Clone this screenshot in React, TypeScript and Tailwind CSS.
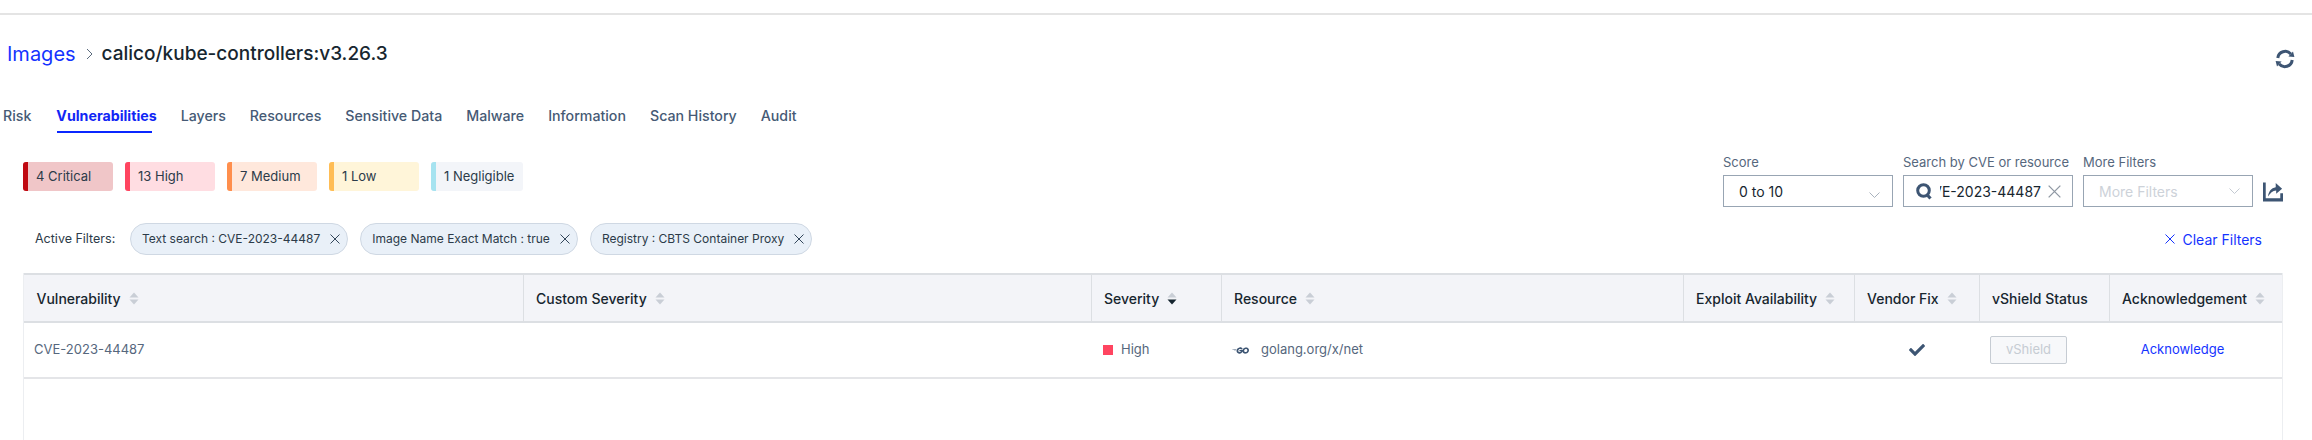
import React from 'react';
import { FaCheck } from 'react-icons/fa';
import { SiGo } from 'react-icons/si';

const tabs = ['Risk', 'Vulnerabilities', 'Layers', 'Resources', 'Sensitive Data', 'Malware', 'Information', 'Scan History', 'Audit'];

const badges = [
  { label: '4 Critical', bg: 'bg-[#f0c6c8]', bar: 'bg-[#c00a12]', width: 'w-[90px]' },
  { label: '13 High', bg: 'bg-[#ffdde2]', bar: 'bg-[#ff4560]', width: 'w-[90px]' },
  { label: '7 Medium', bg: 'bg-[#ffe8dc]', bar: 'bg-[#ff8f4d]', width: 'w-[90px]' },
  { label: '1 Low', bg: 'bg-[#fff5d9]', bar: 'bg-[#ffbd55]', width: 'w-[90px]' },
  { label: '1 Negligible', bg: 'bg-[#f3f5f9]', bar: 'bg-[#a6e3f0]', width: 'w-[92px]' },
];

const chips = ['Text search : CVE-2023-44487', 'Image Name Exact Match : true', 'Registry : CBTS Container Proxy'];

const columns = [
  { label: 'Vulnerability', width: 'w-[499px]', sort: true },
  { label: 'Custom Severity', width: 'w-[568px]', sort: true },
  { label: 'Severity', width: 'w-[130px]', sort: true, active: true },
  { label: 'Resource', width: 'w-[462px]', sort: true },
  { label: 'Exploit Availability', width: 'w-[171px]', sort: true },
  { label: 'Vendor Fix', width: 'w-[125px]', sort: true },
  { label: 'vShield Status', width: 'w-[130px]', sort: false },
  { label: 'Acknowledgement', width: 'w-[173px]', sort: true },
];

const SortIcon = ({ active }: { active?: boolean }) => (
  <svg width="10" height="13" viewBox="0 0 10 13" className="shrink-0">
    <path d="M5 0.5 L9.5 5.5 H0.5 Z" fill="#c9ced6" />
    <path d="M5 12.5 L9.5 7.5 H0.5 Z" fill={active ? '#15252f' : '#c9ced6'} />
  </svg>
);

const CloseIcon = ({ size = 10, color = '#33475b' }: { size?: number; color?: string }) => (
  <svg width={size} height={size} viewBox="0 0 10 10" className="shrink-0">
    <path d="M0.5 0.5 L9.5 9.5 M9.5 0.5 L0.5 9.5" stroke={color} strokeWidth="1" fill="none" />
  </svg>
);

const Chevron = ({ color }: { color: string }) => (
  <svg width="11" height="6" viewBox="0 0 11 6" className="shrink-0">
    <path d="M0.5 0.5 L5.5 5.5 L10.5 0.5" stroke={color} strokeWidth="1" fill="none" />
  </svg>
);

const SearchIcon = () => (
  <svg width="16" height="17" viewBox="0 0 16 17" className="shrink-0">
    <circle cx="7.5" cy="7.5" r="5.8" stroke="#3d5573" strokeWidth="3" fill="none" />
    <path d="M10.8 11.5 L14.5 15.5" stroke="#3d5573" strokeWidth="3.2" fill="none" />
  </svg>
);

const RefreshIcon = () => (
  <svg width="20" height="20" viewBox="0 0 20 20" className="shrink-0">
    <path d="M2.8 9 A7.4 7.4 0 0 1 15.8 5" stroke="#3d5573" strokeWidth="3" fill="none" />
    <path d="M17.2 11 A7.4 7.4 0 0 1 4.2 15" stroke="#3d5573" strokeWidth="3" fill="none" />
    <path d="M13.4 7.4 L19.4 8 L18 2.4 Z" fill="#3d5573" />
    <path d="M6.6 12.6 L0.6 12 L2 17.6 Z" fill="#3d5573" />
  </svg>
);

const ExportIcon = () => (
  <svg width="20" height="20" viewBox="0 0 22 21" className="shrink-0">
    <path d="M0 0 H3 V17.5 H19 V12 H22 V21 H0 Z" fill="#3d5573" />
    <path d="M5.5 15.5 C6 10 9 6 14 5.2 V0.5 L21 7 L14.5 12.5 V8.8 C10.5 9 8 11.5 5.5 15.5 Z" fill="#3d5573" />
  </svg>
);

const Field = ({ label, children }: { label: string; children: React.ReactNode }) => (
  <div className="w-[170px]">
    <div className="h-[13px] text-[13px] leading-[13px] text-[#56677d] whitespace-nowrap">{label}</div>
    <div className="mt-[6px] h-[32px] flex items-center border border-[#98a5b3] bg-white">{children}</div>
  </div>
);

export default function App() {
  return (
    <div className="w-[2312px] h-[440px] overflow-hidden bg-white font-['Inter',sans-serif]">
      <div className="pt-[13px]">
        <div className="h-[2px] bg-[#e4e4e4]" />
      </div>

      {/* Title */}
      <div className="flex items-start justify-between h-[38px] mt-[20px] pl-[7px] pr-[17px]">
        <div className="flex items-center h-[38px]">
          <a className="text-[20px] text-[#1433ff]">Images</a>
          <svg width="7" height="12" viewBox="0 0 7 12" className="ml-[10px] mr-[9px]">
            <path d="M1 1 L6 6 L1 11" stroke="#5b6b7d" strokeWidth="1" fill="none" />
          </svg>
          <span className="text-[19px] font-medium text-[#17262f]">calico/kube-controllers:v3.26.3</span>
        </div>
        <div className="mt-[14px]">
          <RefreshIcon />
        </div>
      </div>

      {/* Tabs */}
      <div className="flex gap-[24px] mt-[27px] pl-[3px]">
        {tabs.map((tab) =>
          tab === 'Vulnerabilities' ? (
            <div key={tab} className="relative ml-[1px] h-[32px] pt-[6px] text-[14.2px] leading-[20px] font-bold text-[#1026f5]">
              {tab}
              <div className="absolute left-[1px] right-[5px] bottom-[-1px] h-[2px] bg-[#0a27ff]" />
            </div>
          ) : (
            <div key={tab} className="h-[32px] pt-[6px] text-[14.2px] leading-[20px] font-medium text-[#465a75]">
              {tab}
            </div>
          ),
        )}
      </div>

      {/* Badges and filter fields */}
      <div className="flex justify-between items-start mt-[24px] pl-[23px] pr-[29px]">
        <div className="flex gap-[12px] mt-[6px]">
          {badges.map((b) => (
            <div key={b.label} className={`flex items-center h-[29px] ${b.width} rounded-[3px] overflow-hidden ${b.bg}`}>
              <div className={`w-[5px] h-full ${b.bar}`} />
              <span className="ml-[8px] text-[13px] text-[#2c3b49] whitespace-nowrap">{b.label}</span>
            </div>
          ))}
        </div>
        <div className="flex items-start gap-[10px]">
          <Field label="Score">
            <span className="ml-[15px] flex-1 text-[14px] text-[#17262f]">0 to 10</span>
            <span className="mr-[12px] mt-[7px]"><Chevron color="#a9b2bd" /></span>
          </Field>
          <Field label="Search by CVE or resource">
            <span className="ml-[12px]"><SearchIcon /></span>
            <div className="ml-[8px] w-[101px] overflow-hidden flex justify-end text-[14px] text-[#17262f] whitespace-nowrap">
              <span className="shrink-0">CVE-2023-44487</span>
            </div>
            <span className="ml-[7px]"><CloseIcon size={13} color="#8f98a3" /></span>
          </Field>
          <Field label="More Filters">
            <span className="ml-[15px] flex-1 text-[14px] text-[#cdd2d9]">More Filters</span>
            <span className="mr-[12px]"><Chevron color="#c4cad2" /></span>
          </Field>
          <div className="mt-[26px]">
            <ExportIcon />
          </div>
        </div>
      </div>

      {/* Active filters */}
      <div className="flex items-center justify-between mt-[16px] pl-[35px] pr-[50px]">
        <div className="flex items-center">
          <span className="w-[95px] text-[12.5px] text-[#2c3b49] whitespace-nowrap">Active Filters:</span>
          <div className="flex gap-[12px]">
            {chips.map((chip) => (
              <div key={chip} className="flex items-center h-[32px] pl-[11px] pr-[7px] gap-[10px] rounded-[16px] border border-[#cfd8e3] bg-[#e9f0f8]">
                <span className="text-[12px] text-[#2c3b49] whitespace-nowrap">{chip}</span>
                <CloseIcon />
              </div>
            ))}
          </div>
        </div>
        <div className="flex items-center gap-[7px] text-[14px] text-[#1433ff]">
          <CloseIcon size={10} color="#1433ff" />
          Clear Filters
        </div>
      </div>

      {/* Table */}
      <div className="ml-[23px] mt-[18px] w-[2260px] h-[200px] border-x border-[#eceef1]">
        <table className="w-full table-fixed border-collapse">
          <colgroup>
            {columns.map((c) => (
              <col key={c.label} className={c.width} />
            ))}
          </colgroup>
          <thead>
            <tr className="h-[48px] bg-[#f3f4f8] border-y-2 border-[#dcdfe3]">
              {columns.map((c, i) => (
                <th key={c.label} className={`font-medium text-left text-[14px] text-[#17262f] px-[12.5px] ${i > 0 ? 'border-l border-[#dcdfe3]' : ''}`}>
                  <div className="flex items-center gap-[8px] whitespace-nowrap">
                    {c.label}
                    {c.sort && <SortIcon active={c.active} />}
                  </div>
                </th>
              ))}
            </tr>
          </thead>
          <tbody>
            <tr className="h-[56px] border-b-2 border-[#e4e5e8] text-[13px] text-[#56677d]">
              <td className="pl-[10px]">CVE-2023-44487</td>
              <td />
              <td className="pl-[12px]">
                <div className="flex items-center gap-[8px]">
                  <span className="w-[10px] h-[10px] bg-[#ff4560]" />
                  High
                </div>
              </td>
              <td className="pl-[11px]">
                <div className="flex items-center gap-[12px]">
                  <SiGo size={17} className="text-[#3d5573]" />
                  golang.org/x/net
                </div>
              </td>
              <td />
              <td>
                <div className="flex justify-center">
                  <FaCheck size={16} className="text-[#3d5573]" />
                </div>
              </td>
              <td className="pl-[11px]">
                <div className="flex items-center justify-center w-[77px] h-[28px] border border-[#c6ccd3] rounded-[2px] bg-[#f7f8fa] text-[#c6ccd3]">
                  vShield
                </div>
              </td>
              <td className="pr-[26px] text-center text-[#1433ff]">Acknowledge</td>
            </tr>
          </tbody>
        </table>
      </div>
    </div>
  );
}
